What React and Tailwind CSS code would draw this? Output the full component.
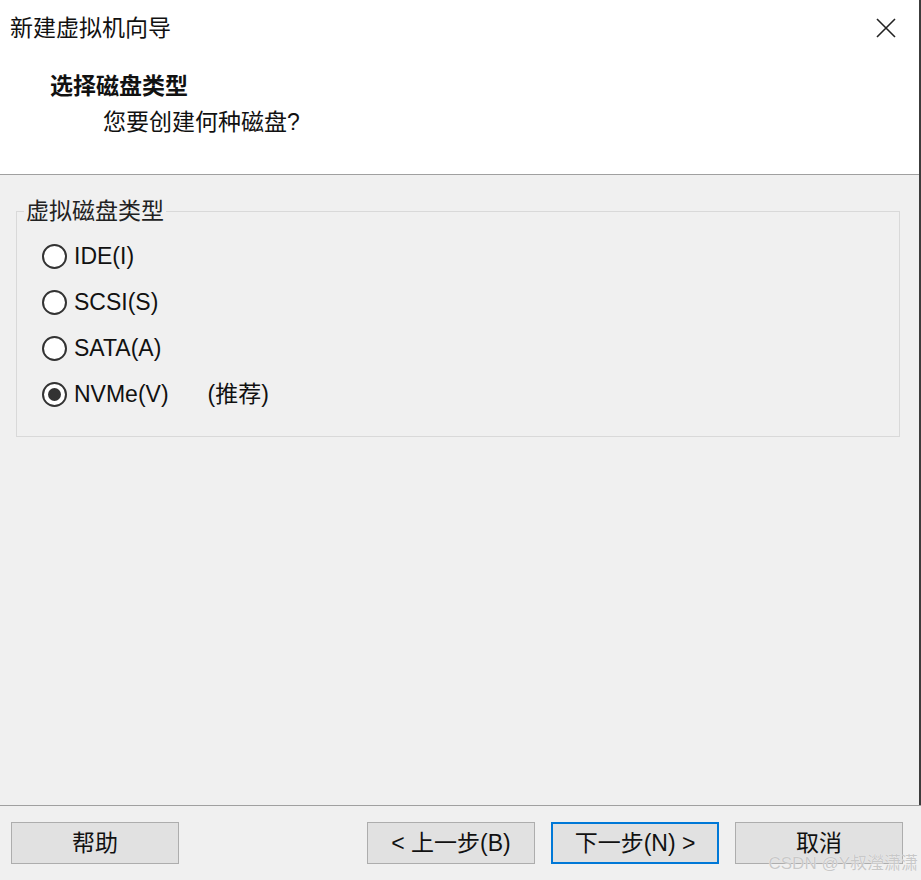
import React from "react";

const font = { fontFamily: '"Liberation Sans", "Noto Sans CJK SC", sans-serif' };

function Radio({ label, checked, extra }) {
  return (
    <div className="flex h-[46px] items-center">
      <span className="flex h-[25px] w-[25px] items-center justify-center rounded-full border-2 border-[#333333] bg-white">
        {checked && <span className="h-[13px] w-[13px] rounded-full bg-[#333333]" />}
      </span>
      <span className="ml-[7px] text-[23px] leading-[32px] text-[#111111]">{label}</span>
      {extra && <span className="ml-[39px] text-[23px] leading-[32px] text-[#111111]">{extra}</span>}
    </div>
  );
}

function Button({ children, primary }) {
  return (
    <button
      className={
        "flex h-[42px] w-[168px] items-center justify-center bg-[#e1e1e1] text-[23px] leading-[32px] text-[#111111] " +
        (primary ? "border-2 border-[#0078d7]" : "border border-[#adadad]")
      }
    >
      {children}
    </button>
  );
}

export default function App() {
  return (
    <div className="relative flex h-[880px] w-[921px] flex-col overflow-hidden bg-[#f0f0f0]" style={font}>
      <div className="flex flex-1 flex-col border-r-2 border-[#3c3c3c]">
        <div className="h-[175px] border-b border-[#a0a0a0] bg-white pt-[12px]">
          <div className="flex h-[32px] items-center justify-between pl-[10px] pr-[22px]">
            <span className="text-[23px] leading-[32px] text-[#111111]">新建虚拟机向导</span>
            <svg width="22" height="22" viewBox="0 0 22 22" className="text-[#222222]">
              <path d="M2 2 L20 20 M20 2 L2 20" stroke="currentColor" strokeWidth="1.6" fill="none" />
            </svg>
          </div>
          <div className="mt-[26px] pl-[50px] text-[23px] font-bold leading-[32px] text-[#111111]">选择磁盘类型</div>
          <div className="mt-[4px] pl-[103px] text-[23px] leading-[32px] text-[#111111]">您要创建何种磁盘?</div>
        </div>
        <div className="flex-1 bg-[#f0f0f0] pt-[20px]">
          <fieldset className="ml-[16px] mr-[19px] border border-[#d9d9d9] p-0 pb-[19px]">
            <legend className="ml-[7px] px-[2px] text-[23px] leading-[32px] text-[#222222]">虚拟磁盘类型</legend>
            <div className="mt-[6px] flex flex-col pl-[25px]">
              <Radio label="IDE(I)" />
              <Radio label="SCSI(S)" />
              <Radio label="SATA(A)" />
              <Radio label="NVMe(V)" checked extra="(推荐)" />
            </div>
          </fieldset>
        </div>
      </div>
      <div className="flex h-[75px] items-start border-t border-[#a0a0a0] bg-[#f0f0f0] pl-[11px] pr-[18px] pt-[16px]">
        <Button>帮助</Button>
        <div className="ml-auto flex gap-[16px]">
          <Button>&lt; 上一步(B)</Button>
          <Button primary>下一步(N) &gt;</Button>
          <Button>取消</Button>
        </div>
      </div>
      <div className="absolute bottom-[5px] right-[3px] text-[17px] leading-[22px] text-[#c8c8c8]" style={{ textShadow: "0 0 1px #ffffff" }}>
        CSDN @Y叔瀅潇潇
      </div>
    </div>
  );
}
